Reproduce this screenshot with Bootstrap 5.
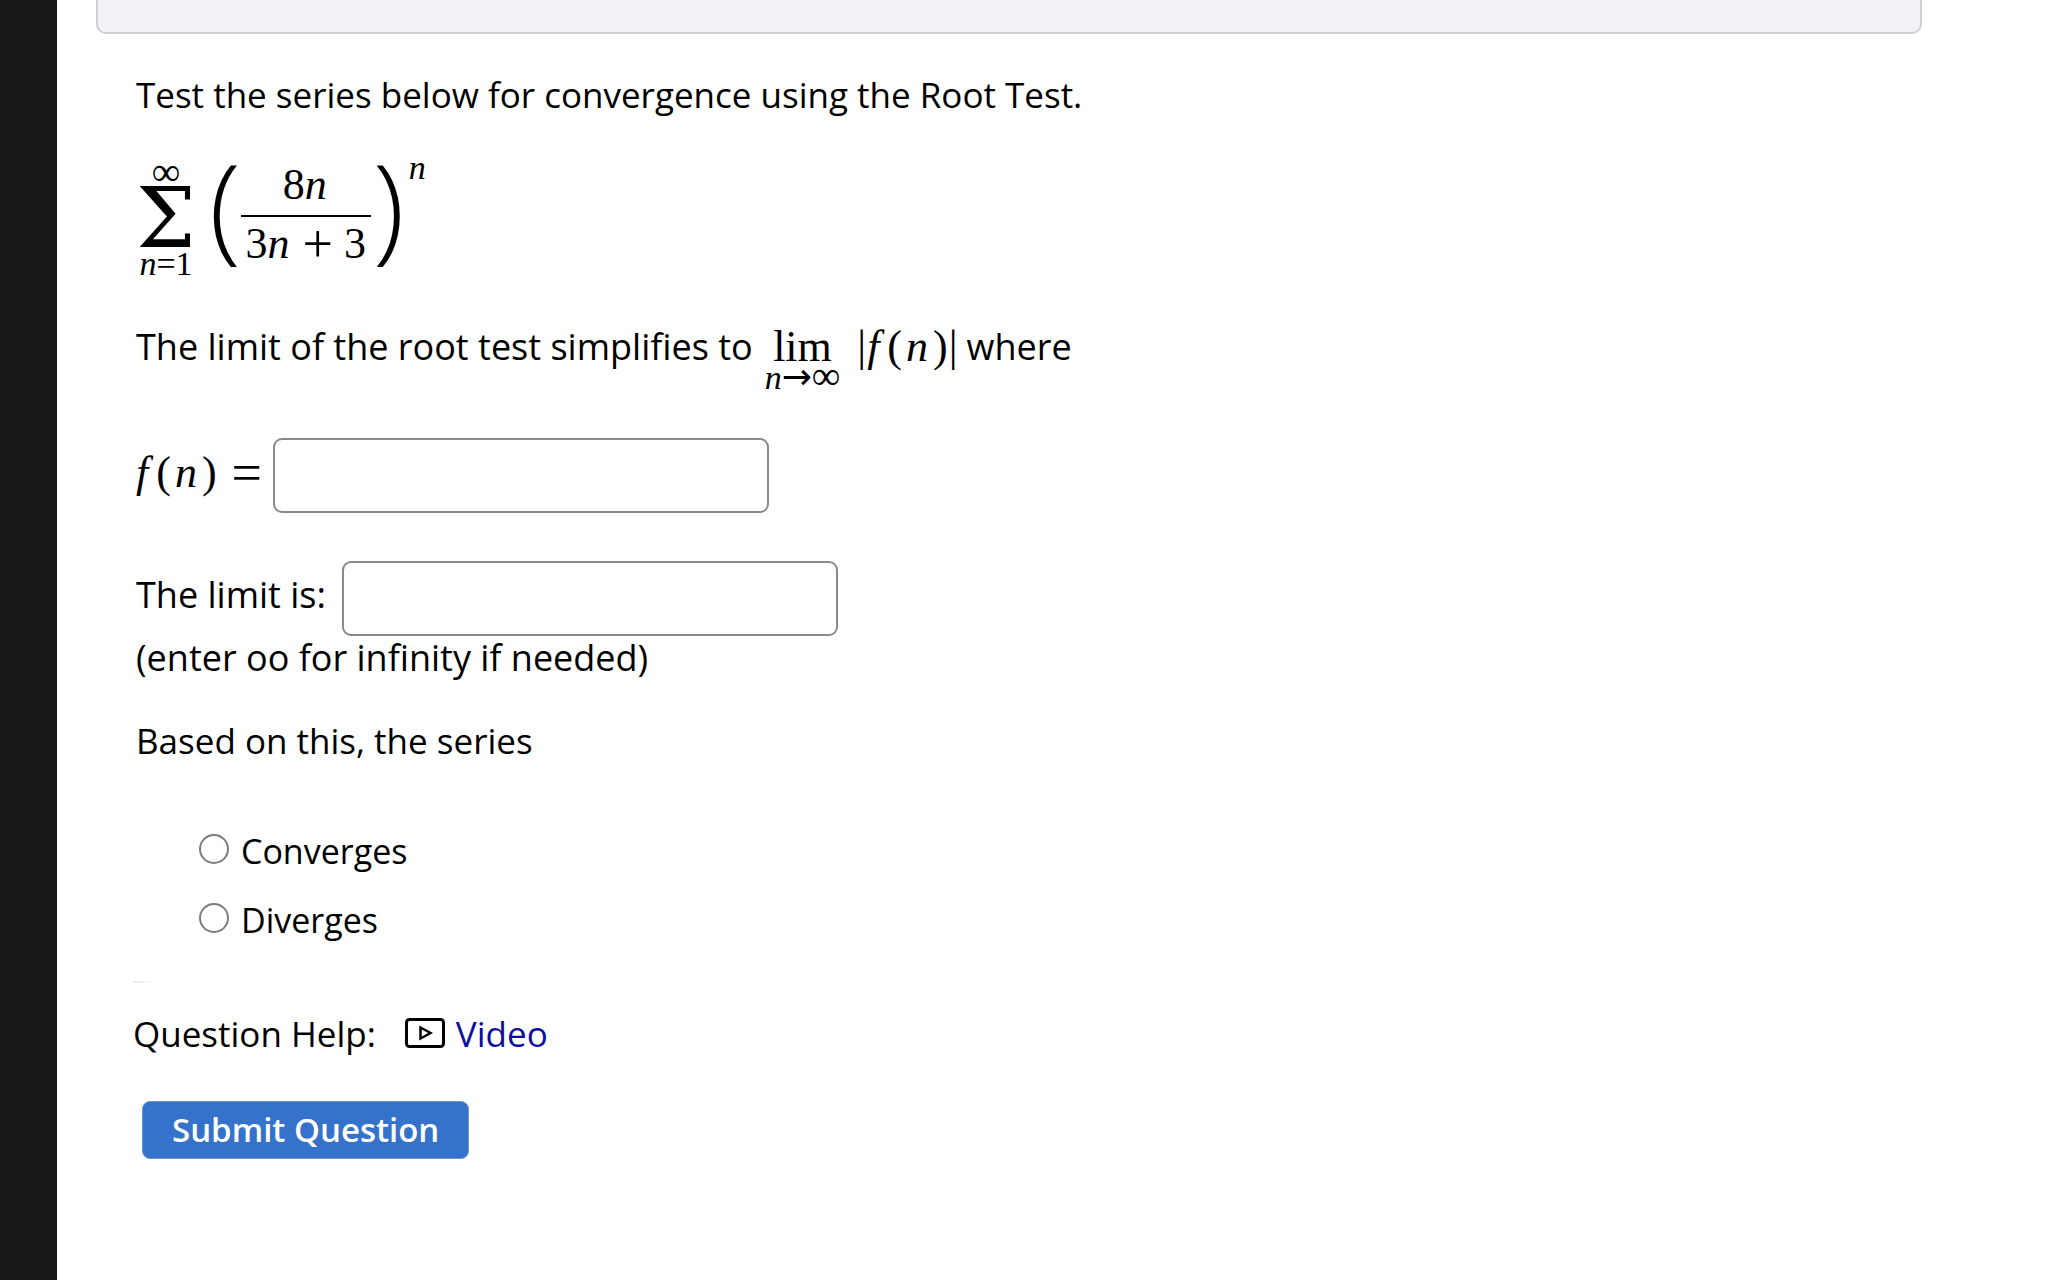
<!DOCTYPE html>
<html lang="en">
<head>
<meta charset="utf-8">
<meta name="viewport" content="width=device-width, initial-scale=1">
<title>Root Test</title>
<link href="https://cdn.jsdelivr.net/npm/bootstrap@5.3.0/dist/css/bootstrap.min.css" rel="stylesheet">
<style>
body { font-family: "Open Sans", "Noto Sans", sans-serif; font-size: 35px; line-height: 48px; color: #000; background: #fff; }
.side-strip { width: 57px; background: #171717; }
.main-col { padding: 0 126px 0 39px; }
.top-panel { height: 34px; background: #f3f2f9; border: 2px solid #d0d0d4; border-top: 0; border-radius: 0 0 10px 10px; }
.question { padding: 37px 40px 0; }
.math { font-family: "Liberation Serif", serif; font-size: 44px; line-height: 48px; }
.math i { padding-right: 2px; }
.math .func { padding-right: 8px; }
.math .arg { padding: 0 5px 0 4px; }
.math-sub { font-size: 34px; line-height: 18px; white-space: nowrap; }
.math-sub i { padding: 0; }
.math-raise { margin-top: -4px; }
.infinity { font-size: 40px; line-height: 18px; }
.arrow { font-family: "DejaVu Sans", sans-serif; font-size: 36px; }
.operator { font-size: 54px; line-height: 1px; vertical-align: -4px; }
.series { margin-top: 44px; height: 116px; }
.sum-col { width: 60px; }
.sum-sign { font-family: "DejaVu Serif", serif; font-size: 84px; line-height: 74px; }
.delim { font-family: "Open Sans", sans-serif; font-weight: 300; font-size: 117px; line-height: 82px; }
.sum-col + .delim { margin-left: 13px; }
.frac-top { border-bottom: 2px solid #000; line-height: 44px; padding-bottom: 8px; width: 130px; }
.frac-bottom { line-height: 54px; white-space: nowrap; }
.series .frac { margin-right: 2px; }
.limit-line { margin-top: 44px; }
.limit-text { font-size: 36px; }
.lim-col { margin: 0 16px 0 12px; }
.abs-bar { padding: 0 1px; }
.answer-row { margin-top: 48px; }
.limit-line + .answer-row { margin-top: 51px; }
.answer-row label { padding-bottom: 8px; margin-right: 16px; }
.answer-row label.math { padding-bottom: 6px; margin-right: 11px; }
.answer-row .operator { margin-left: 4px; }
.answer-box { width: 496px; height: 75px; border: 2px solid #8a8a8a; border-radius: 9px; padding: 6px 12px; }
.hint { line-height: 44px; margin: 0 0 37px; }
.choices { padding-left: 63px; margin-top: 49px; }
.choice { height: 69px; gap: 12px; font-size: 34px; }
.choice label { padding-top: 5px; }
.choice input { appearance: none; width: 30px; height: 30px; border: 2px solid #7c7c7c; border-radius: 50%; background: #fff; margin: 0; }
.help-area { padding: 29px 37px 0; }
.short-rule { width: 24px; height: 2px; background: linear-gradient(90deg, #e9e9e9, #fff); margin-bottom: 27px; }
.video-link { color: #0e0e9e; gap: 11px; margin-left: 29px; }
.video-link svg { margin-bottom: 2px; }
.submit-btn { height: 58px; margin: 43px 0 0 9px; padding: 0 29px; background: #3472cb; color: #fff; border: 1px solid #6f95cf; border-radius: 8px; font-size: 33px; font-weight: 600; line-height: 48px; }
</style>
</head>
<body>
<div class="d-flex min-vh-100">
  <aside class="side-strip flex-shrink-0"></aside>
  <main class="main-col flex-grow-1">
    <div class="top-panel"></div>
    <form onsubmit="return false">
      <div class="question">
        <p class="m-0">Test the series below for convergence using the Root Test.</p>
        <div class="series math d-flex align-items-start">
          <div class="sum-col d-flex flex-column align-items-center">
            <span class="infinity">∞</span>
            <span class="sum-sign">Σ</span>
            <span class="math-sub"><i>n</i>=1</span>
          </div>
          <span class="delim">(</span>
          <div class="frac text-center">
            <div class="frac-top">8<i>n</i></div>
            <div class="frac-bottom">3<i>n</i> <span class="operator">+</span> 3</div>
          </div>
          <span class="delim">)</span>
          <i class="math-sub math-raise ms-1">n</i>
        </div>
        <div class="limit-line limit-text d-flex align-items-start">
          <span>The limit of the root test simplifies to</span>
          <span class="math lim-col d-flex flex-column align-items-center"><span>lim</span><span class="math-sub math-raise"><i>n</i><span class="arrow">→</span><span class="infinity">∞</span></span></span>
          <span class="math me-2"><span class="abs-bar">|</span><i class="func">f</i>(<i class="arg">n</i>)<span class="abs-bar">|</span></span>
          <span>where</span>
        </div>
        <div class="answer-row d-flex align-items-center">
          <label for="fn" class="math"><i class="func">f</i>(<i class="arg">n</i>) <span class="operator">=</span></label>
          <input id="fn" type="text" class="answer-box">
        </div>
        <div class="answer-row limit-text d-flex align-items-center">
          <label for="limit">The limit is:</label>
          <input id="limit" type="text" class="answer-box">
        </div>
        <p class="hint limit-text">(enter oo for infinity if needed)</p>
        <p class="m-0">Based on this, the series</p>
        <div class="choices">
          <div class="choice d-flex align-items-center"><input type="radio" name="result" id="conv"><label for="conv">Converges</label></div>
          <div class="choice d-flex align-items-center"><input type="radio" name="result" id="div"><label for="div">Diverges</label></div>
        </div>
      </div>
      <div class="help-area">
        <div class="short-rule"></div>
        <div class="d-flex align-items-center">
          <span>Question Help:</span>
          <a href="#" class="video-link d-flex align-items-center text-decoration-none">
            <svg width="40" height="30" viewBox="0 0 40 30" fill="none" stroke="#000" aria-hidden="true"><rect x="1.5" y="1.5" width="37" height="27" rx="3" stroke-width="3"/><path d="M15.5 9.5v11l10-5.500z" stroke-width="2.500"/></svg>
            <span>Video</span>
          </a>
        </div>
        <button type="submit" class="submit-btn">Submit Question</button>
      </div>
    </form>
  </main>
</div>
<script src="https://cdn.jsdelivr.net/npm/bootstrap@5.3.0/dist/js/bootstrap.bundle.min.js"></script>
</body>
</html>
